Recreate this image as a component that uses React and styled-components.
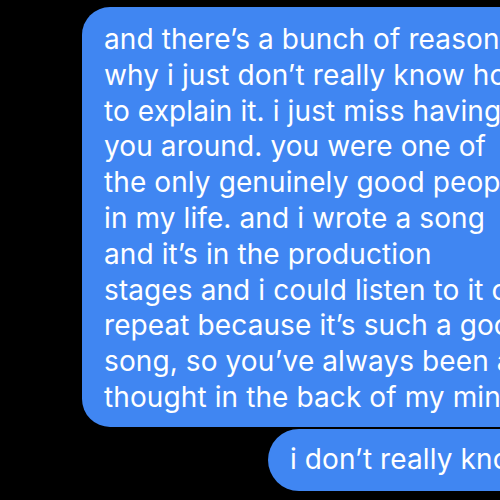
import styled, { createGlobalStyle } from "styled-components";

const GlobalStyle = createGlobalStyle`
  html, body {
    margin: 0;
    padding: 0;
    background: #000;
    overflow: hidden;
  }
`;

const Screen = styled.div`
  width: 500px;
  height: 500px;
  background: #000;
  overflow: hidden;
`;

const Thread = styled.div`
  width: 560px;
  display: flex;
  flex-direction: column;
  align-items: flex-end;
  gap: 2px;
  padding-top: 7px;
  padding-right: 16px;
  box-sizing: border-box;
`;

const Bubble = styled.div`
  width: ${(p) => p.$width}px;
  box-sizing: border-box;
  background: #4086f2;
  color: #fff;
  font-family: Inter, "Open Sans", sans-serif;
  font-size: 28px;
  line-height: 35.8px;
  letter-spacing: 0.1px;
  white-space: nowrap;
  border-radius: ${(p) => (p.$pill ? "31px" : "28px")};
  padding: ${(p) => (p.$pill ? "13px 22px" : "15px 22px 11px")};
`;

const lines = [
  "and there’s a bunch of reasons",
  "why i just don’t really know how",
  "to explain it. i just miss having",
  "you around. you were one of",
  "the only genuinely good people",
  "in my life. and i wrote a song",
  "and it’s in the production",
  "stages and i could listen to it on",
  "repeat because it’s such a good",
  "song, so you’ve always been a",
  "thought in the back of my mind",
];

export default function App() {
  return (
    <Screen>
      <GlobalStyle />
      <Thread>
        <Bubble $width={462}>
          {lines.map((l, i) => (
            <div key={i}>{l}</div>
          ))}
        </Bubble>
        <Bubble $width={276} $pill>
          i don’t really know
        </Bubble>
      </Thread>
    </Screen>
  );
}
